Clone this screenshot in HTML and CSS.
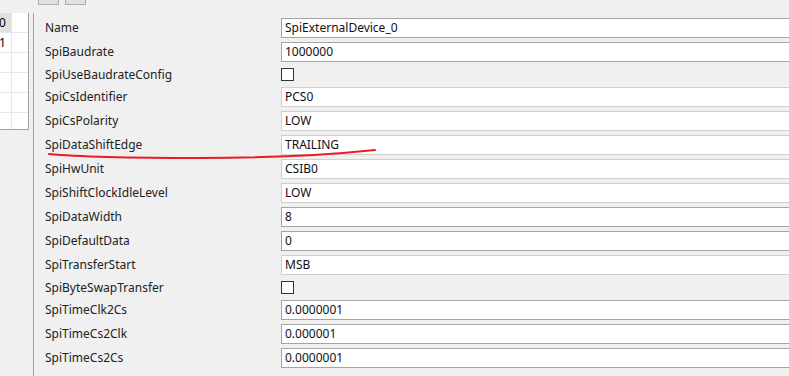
FILE: index.html
```html
<!DOCTYPE html>
<html>
<head>
<meta charset="utf-8">
<link rel="stylesheet" href="styles.css">
</head>
<body>
<div class="toolbar">
  <span class="tbtn"></span>
  <span class="tbtn"></span>
</div>
<div class="main">
  <div class="left">
    <div class="table">
      <div class="trow"><span class="idx sel">0</span><span class="cell"></span></div>
      <div class="trow"><span class="idx">1</span><span class="cell"></span></div>
      <div class="trow"><span class="idx"></span><span class="cell"></span></div>
      <div class="trow"><span class="idx"></span><span class="cell"></span></div>
      <div class="trow"><span class="idx"></span><span class="cell"></span></div>
      <div class="trow last"><span class="idx"></span><span class="cell"></span></div>
    </div>
  </div>
  <div class="form">
    <div class="lbl">Name</div><div class="field edit">SpiExternalDevice_0</div>
    <div class="lbl">SpiBaudrate</div><div class="field edit">1000000</div>
    <div class="lbl cbrow">SpiUseBaudrateConfig</div><div class="cbrow"><span class="check"></span></div>
    <div class="lbl">SpiCsIdentifier</div><div class="field combo">PCS0</div>
    <div class="lbl">SpiCsPolarity</div><div class="field combo">LOW</div>
    <div class="lbl">SpiDataShiftEdge</div><div class="field combo">TRAILING</div>
    <div class="lbl">SpiHwUnit</div><div class="field combo">CSIB0</div>
    <div class="lbl">SpiShiftClockIdleLevel</div><div class="field combo">LOW</div>
    <div class="lbl">SpiDataWidth</div><div class="field edit">8</div>
    <div class="lbl">SpiDefaultData</div><div class="field edit">0</div>
    <div class="lbl">SpiTransferStart</div><div class="field combo">MSB</div>
    <div class="lbl cbrow">SpiByteSwapTransfer</div><div class="cbrow"><span class="check"></span></div>
    <div class="lbl">SpiTimeClk2Cs</div><div class="field edit">0.0000001</div>
    <div class="lbl">SpiTimeCs2Clk</div><div class="field edit">0.000001</div>
    <div class="lbl">SpiTimeCs2Cs</div><div class="field edit">0.0000001</div>
  </div>
</div>
<svg class="annot" width="789" height="376" viewBox="0 0 789 376">
  <path d="M49 154 Q 90 158 200 158 Q 300 158 375 150" fill="none" stroke="#ec1c24" stroke-width="2" stroke-linecap="round"/>
</svg>
</body>
</html>
```

FILE: styles.css
```css
html, body {
  margin: 0;
  padding: 0;
  width: 789px;
  height: 376px;
  overflow: hidden;
  background: #f0f0f0;
  font-family: "Noto Sans", "Open Sans", sans-serif;
  font-size: 12px;
  color: #1a1a1a;
}

.toolbar {
  height: 13px;
  display: flex;
  align-items: flex-start;
  gap: 6px;
  padding-left: 38px;
}

.tbtn {
  width: 19px;
  height: 4px;
  background: #e1e1e1;
  border: 1px solid #adadad;
  border-top: none;
}

.main {
  display: flex;
  height: 363px;
  overflow: hidden;
}

.left {
  width: 33px;
  flex: none;
  border-right: 1px solid #a0a0a0;
}

.table {
  width: 28px;
  height: 116px;
  background: #fff;
  border-right: 1px solid #a0a0a0;
  border-bottom: 1px solid #a0a0a0;
  overflow: hidden;
}

.trow {
  display: flex;
  height: 19px;
  border-bottom: 1px solid #e3e9f1;
}

.idx {
  width: 11px;
  line-height: 19px;
  border-right: 1px solid #e3e9f1;
  color: #000;
  font-size: 12px;
  text-indent: -1px;
}

.idx.sel {
  background: #e0e0e0;
}

.cell {
  flex: 1;
}

.form {
  flex: none;
  width: 1000px;
  padding: 5px 0 0 11px;
  display: grid;
  grid-template-columns: 236px 1fr;
  grid-template-rows: 20px 20px 17px repeat(8, 20px) 17px 20px 20px 20px;
  row-gap: 4px;
  align-content: start;
}

.lbl {
  line-height: 20px;
  color: #222;
}

.lbl.cbrow, .cbrow {
  height: 17px;
  line-height: 17px;
}

.field {
  box-sizing: border-box;
  height: 20px;
  line-height: 18px;
  background: #fff;
  padding-left: 3px;
  color: #111;
}

.field.edit {
  border: 1px solid #a4a4a4;
  border-right: none;
}

.field.combo {
  border: 1px solid #cfcfcf;
  border-right: none;
}

.check {
  display: block;
  box-sizing: border-box;
  width: 13px;
  height: 13px;
  margin-top: 2px;
  background: #fff;
  border: 1px solid #333;
}

.annot {
  position: absolute;
  left: 0;
  top: 0;
  pointer-events: none;
}
```
